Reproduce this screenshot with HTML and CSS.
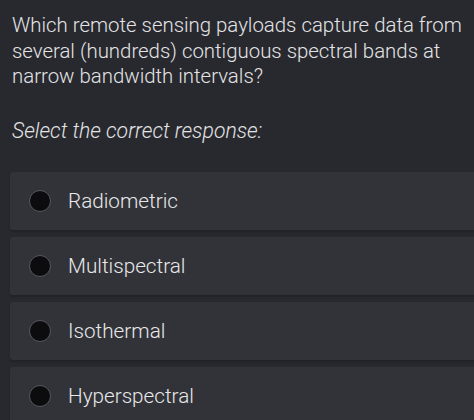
FILE: index.html
```html
<!DOCTYPE html>
<html>
<head>
<meta charset="utf-8">
<link rel="stylesheet" href="styles.css">
</head>
<body>
<div class="page">
  <p class="question">Which remote sensing payloads capture data from several (hundreds) contiguous spectral bands at narrow bandwidth intervals?</p>
  <p class="prompt">Select the correct response:</p>
  <ul class="options">
    <li class="option"><span class="radio"></span><span class="label">Radiometric</span></li>
    <li class="option"><span class="radio"></span><span class="label">Multispectral</span></li>
    <li class="option"><span class="radio"></span><span class="label">Isothermal</span></li>
    <li class="option"><span class="radio"></span><span class="label">Hyperspectral</span></li>
  </ul>
</div>
</body>
</html>
```
FILE: styles.css
```css
html, body {
  margin: 0;
  padding: 0;
  background: #28292e;
  overflow: hidden;
}
.page {
  width: 474px;
  height: 420px;
  overflow: hidden;
  font-family: Roboto, "Liberation Sans", sans-serif;
  font-weight: 300;
  color: #e4e4e6;
  padding-left: 10px;
  box-sizing: border-box;
}
.question {
  margin: 0;
  padding: 13px 0 0 2px;
  font-size: 20.4px;
  line-height: 25.5px;
}
.prompt {
  margin: 0;
  padding: 28px 0 0 2px;
  font-size: 21.2px;
  line-height: 26px;
  font-style: italic;
}
.options {
  list-style: none;
  margin: 0;
  padding: 0;
  margin-top: 28px;
  margin-right: -40px;
  display: flex;
  flex-direction: column;
  gap: 7px;
}
.option {
  height: 58px;
  background: #323338;
  border-radius: 3px;
  display: flex;
  align-items: center;
  padding-left: 19px;
  box-shadow: 0 2px 2px rgba(0,0,0,0.18);
}
.radio {
  width: 20px;
  height: 20px;
  border-radius: 50%;
  background: #0c0c0f;
  border: 1px solid #56575c;
  flex: none;
}
.label {
  margin-left: 17px;
  font-size: 20.7px;
  color: #e8e8ea;
}
```
